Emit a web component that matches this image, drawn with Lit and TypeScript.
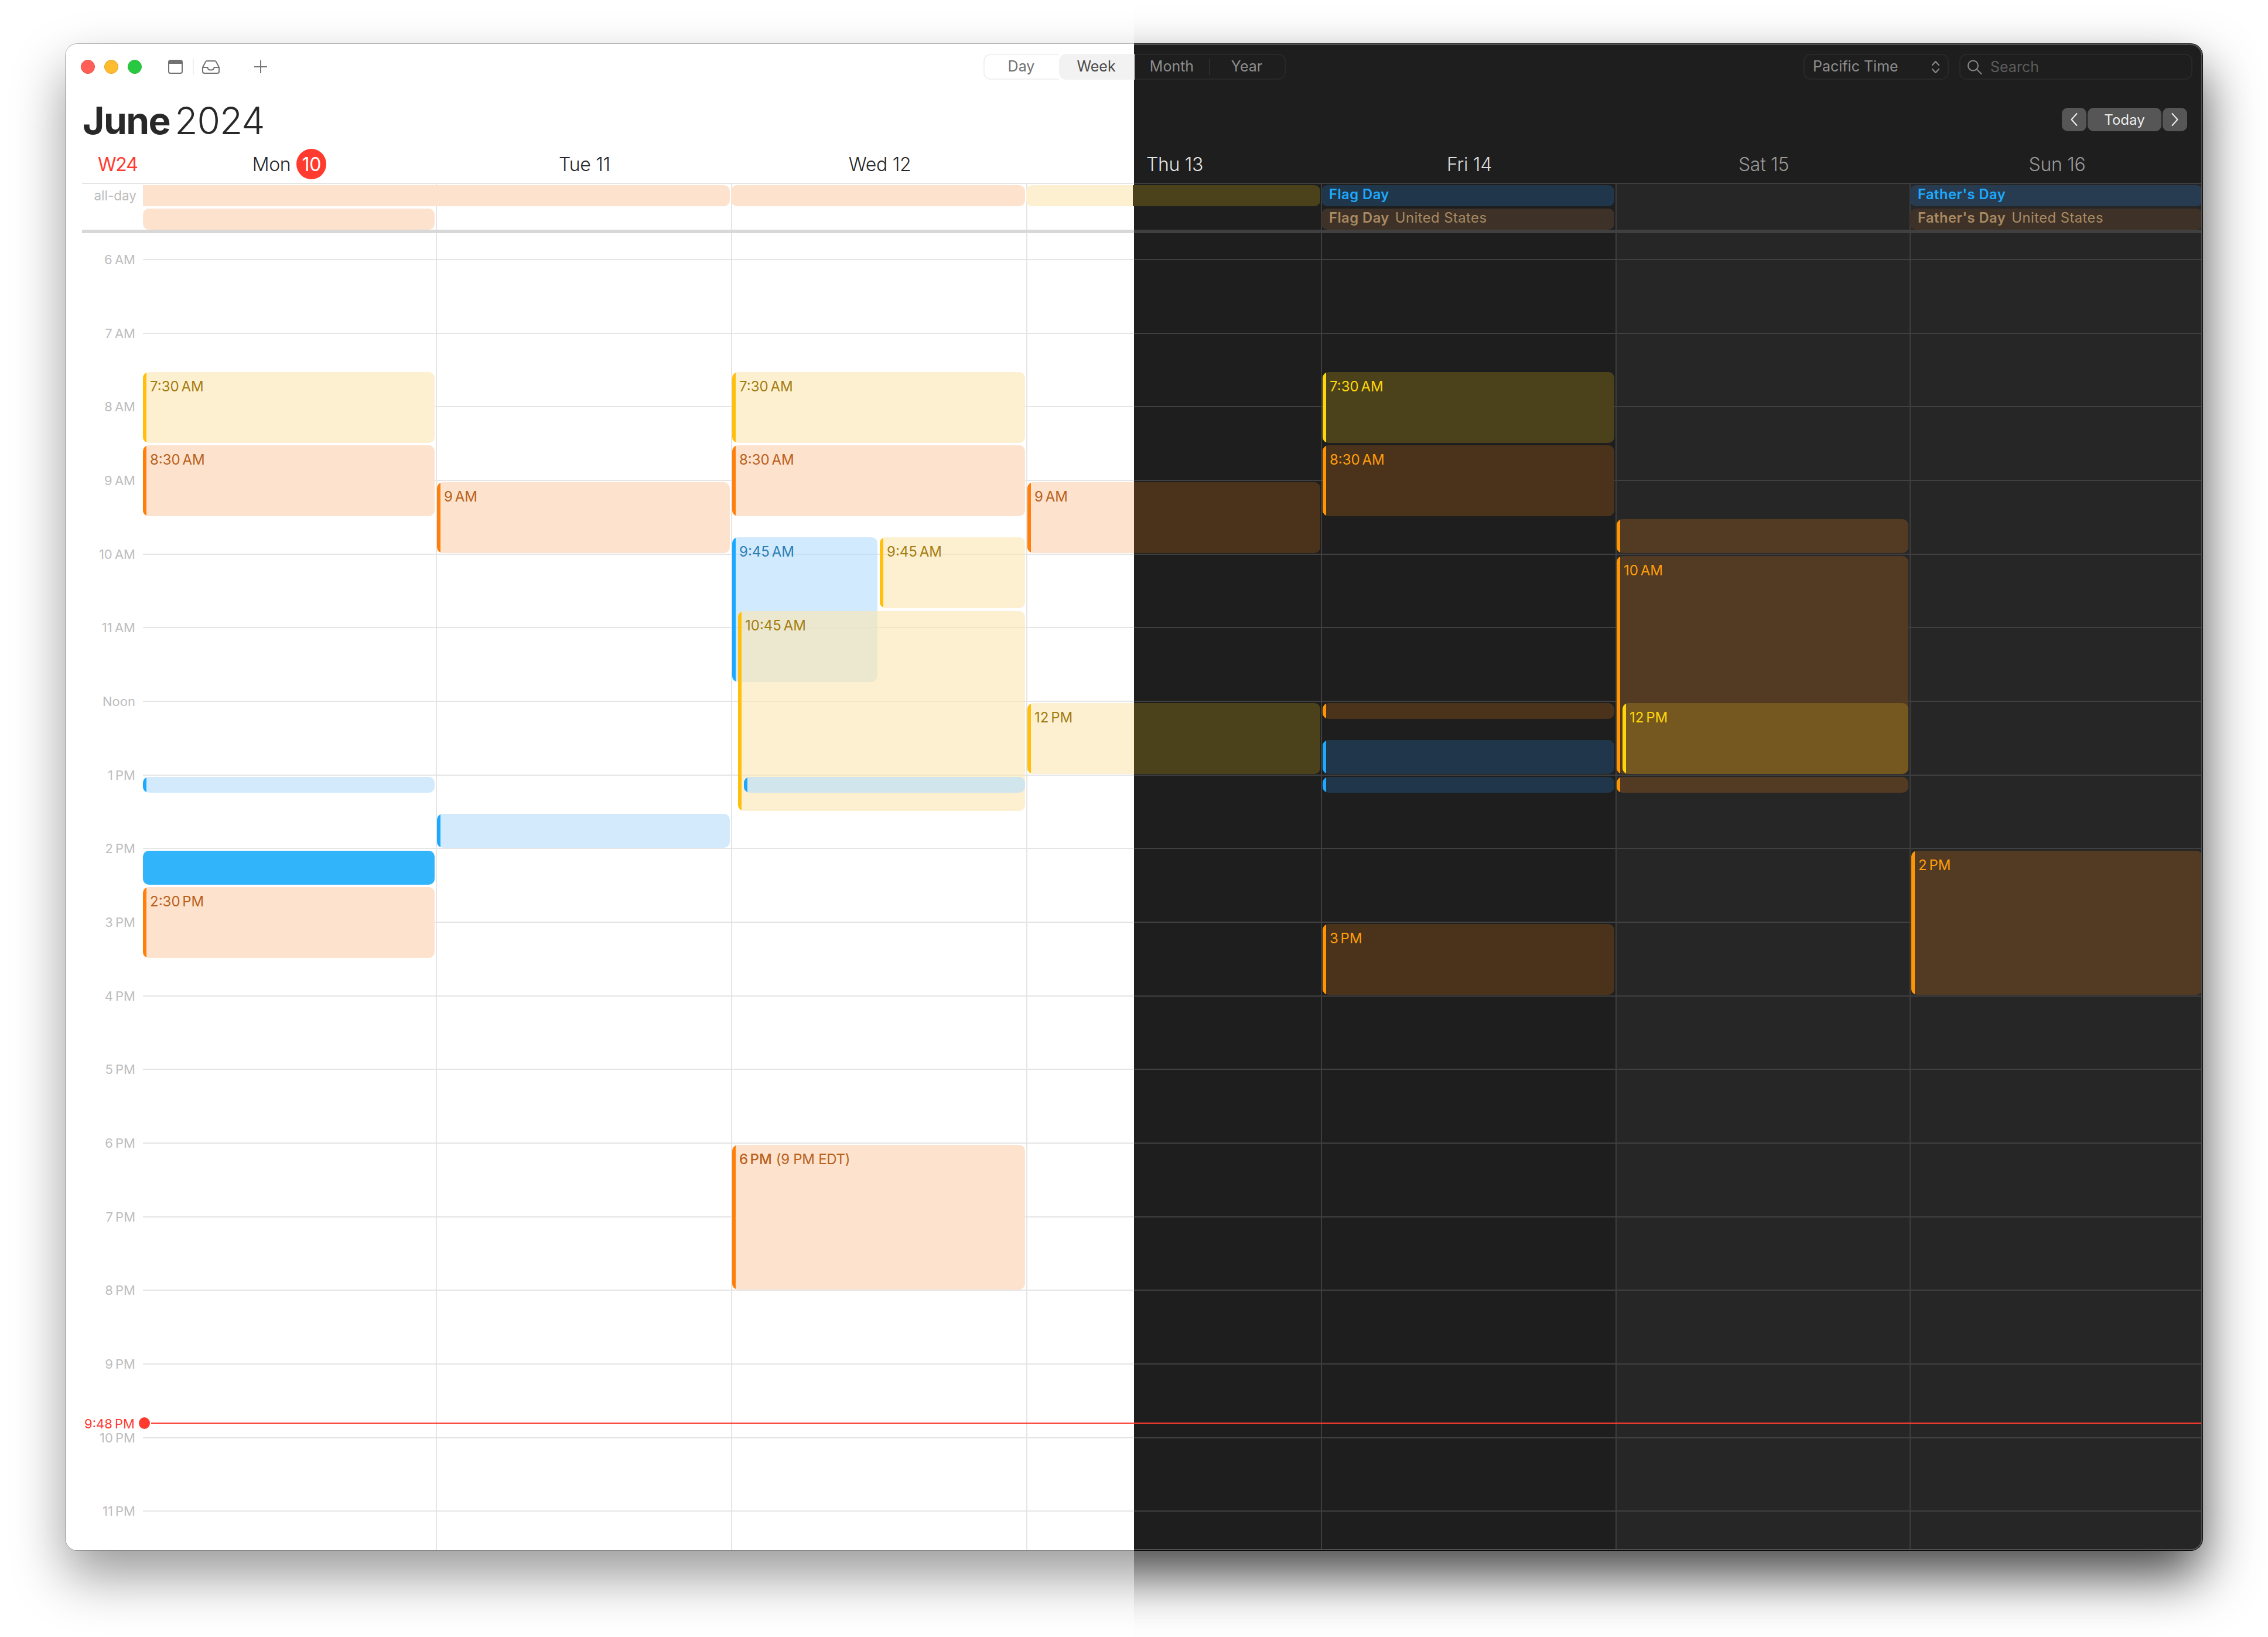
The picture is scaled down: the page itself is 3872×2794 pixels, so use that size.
import { LitElement, html, css, nothing } from "lit";
import { customElement } from "lit/decorators.js";

const H = 125.67;
const yOf = (t: number) => 45 + (t - 6) * H;
const LEFT = [0, 0, 0, 0, 1, 0, 1];
const RIGHT = [2, 2, 2, 1, 2, 2, 0];

type Ev = { s: number; e: number; c: string; label?: string; sub?: string; l?: number; r?: number; x?: string };

const DAYS: { name: string; cls: string; head: string; events: Ev[] }[] = [
  { name: "Mon", cls: "", head: "", events: [
    { s: 7.5, e: 8.5, c: "y", label: "7:30 AM" },
    { s: 8.5, e: 9.5, c: "o", label: "8:30 AM" },
    { s: 13, e: 13.25, c: "b" },
    { s: 14, e: 14.5, c: "s" },
    { s: 14.5, e: 15.5, c: "o", label: "2:30 PM" },
  ]},
  { name: "Tue 11", cls: "", head: "", events: [
    { s: 9, e: 10, c: "o", label: "9 AM" },
    { s: 13.5, e: 14, c: "b" },
  ]},
  { name: "Wed 12", cls: "", head: "", events: [
    { s: 7.5, e: 8.5, c: "y", label: "7:30 AM" },
    { s: 8.5, e: 9.5, c: "o", label: "8:30 AM" },
    { s: 9.75, e: 11.75, c: "b", label: "9:45 AM", r: 252, x: "t" },
    { s: 9.75, e: 10.75, c: "y", label: "9:45 AM", l: 252, x: "t" },
    { s: 10.75, e: 13.5, c: "y", label: "10:45 AM", l: 10, x: "t" },
    { s: 13, e: 13.25, c: "b", l: 20, x: "t" },
    { s: 18, e: 20, c: "o", label: "6 PM", sub: "(9 PM EDT)" },
  ]},
  { name: "Thu 13", cls: "thu", head: "hd-thu", events: [
    { s: 9, e: 10, c: "o", label: "9 AM" },
    { s: 12, e: 13, c: "y", label: "12 PM" },
  ]},
  { name: "Fri 14", cls: "dk", head: "hd-fri", events: [
    { s: 7.5, e: 8.5, c: "y", label: "7:30 AM" },
    { s: 8.5, e: 9.5, c: "o", label: "8:30 AM" },
    { s: 12, e: 12.25, c: "o" },
    { s: 12.5, e: 13, c: "b" },
    { s: 13, e: 13.25, c: "b" },
    { s: 15, e: 16, c: "o", label: "3 PM" },
  ]},
  { name: "Sat 15", cls: "dk wk", head: "hd-we", events: [
    { s: 9.5, e: 10, c: "o" },
    { s: 10, e: 13, c: "o", label: "10 AM" },
    { s: 12, e: 13, c: "y", label: "12 PM", l: 10 },
    { s: 13, e: 13.25, c: "o" },
  ]},
  { name: "Sun 16", cls: "dk wk", head: "hd-we", events: [
    { s: 14, e: 16, c: "o", label: "2 PM" },
  ]},
];

const HOURS = ["6 AM","7 AM","8 AM","9 AM","10 AM","11 AM","Noon","1 PM","2 PM","3 PM","4 PM","5 PM","6 PM","7 PM","8 PM","9 PM","10 PM","11 PM"];

type Ad = { col: number; span: number; row: number; c: string; label?: string; sub?: string };
const ALLDAY: Ad[] = [
  { col: 0, span: 2, row: 1, c: "ao flat" },
  { col: 2, span: 1, row: 1, c: "ao" },
  { col: 3, span: 1, row: 1, c: "ay" },
  { col: 4, span: 1, row: 1, c: "ab", label: "Flag Day" },
  { col: 6, span: 1, row: 1, c: "ab sun", label: "Father's Day" },
  { col: 0, span: 1, row: 2, c: "ao" },
  { col: 4, span: 1, row: 2, c: "an", label: "Flag Day", sub: "United States" },
  { col: 6, span: 1, row: 2, c: "an", label: "Father's Day", sub: "United States" },
];

@customElement("app-root")
export class AppRoot extends LitElement {
  static styles = css`
    :host { display: block; height: 2794px; background: #fff; overflow: hidden; font-family: Inter, "Liberation Sans", sans-serif; }
    .shell { position: relative; width: 3648px; height: 2571px; margin-left: 112px; top: 75px; }
    .shell::before, .shell::after { content: ""; position: absolute; inset: 0; border-radius: 20px; }
    .shell::before { box-shadow: 0 0 0 1px rgba(0,0,0,.3), 0 44px 90px rgba(0,0,0,.4); clip-path: inset(-300px 1824px -300px -300px); }
    .shell::after { box-shadow: 0 0 0 1px #000, 0 44px 90px rgba(0,0,0,.72); clip-path: inset(-300px -300px -300px 1824px); }
    .win { position: relative; z-index: 1; height: 100%; border-radius: 20px; overflow: hidden; display: flex; flex-direction: column;
      background: linear-gradient(90deg, #fff 1824px, #1e1e1e 1824px); }
    .win::after { content: ""; position: absolute; inset: 0; z-index: 50; border-radius: 20px; box-shadow: inset 0 0 0 2px #505050; clip-path: inset(0 0 0 1824px); pointer-events: none; }

    .bar { display: flex; align-items: center; height: 44px; margin-top: 17px; flex: none; }
    .dots { display: flex; gap: 16px; margin-left: 26px; }
    .dot { width: 24px; height: 24px; border-radius: 50%; box-sizing: border-box; border: 1px solid; }
    .red { background: #ff5f57; border-color: #e5504a; }
    .amber { background: #febc2e; border-color: #dea122; }
    .green { background: #28c840; border-color: #26b83b; }
    .ico-cal { margin-left: 45px; }
    .vsep { width: 2px; height: 28px; background: #efefef; margin-left: 17px; }
    .ico-inbox { margin-left: 14px; }
    .ico-plus { margin-left: 59px; }
    svg { display: block; flex: none; }

    .seg { display: flex; height: 44px; width: 516px; margin-left: 1223px; font-size: 25px; box-sizing: border-box; }
    .seg > div { width: 129px; box-sizing: border-box; display: flex; align-items: center; justify-content: center; border: 2px solid; padding: 0 2px 2px 0; }
    .seg-day { border-color: #f1f1f1 !important; border-right: 0 !important; border-radius: 12px 0 0 12px; color: #6f6f6f; }
    .seg-week { background: #f2f2f2; border-color: #f2f2f2 !important; border-radius: 12px 0 0 12px; color: #4a4a4a; }
    .seg-month { border-color: #282828 !important; border-left: 0 !important; border-right: 0 !important; color: #8e8e8e; position: relative; }
    .seg-month::after { content: ""; position: absolute; right: 0; top: 6px; bottom: 6px; width: 2px; background: #2c2c2c; }
    .seg-year { border-color: #282828 !important; border-left: 0 !important; border-radius: 0 12px 12px 0; color: #8e8e8e; }

    .select { width: 248px; height: 44px; margin-left: 884px; box-sizing: border-box; border: 2px solid #282828; border-radius: 12px; display: flex; align-items: center; justify-content: space-between; padding: 0 13px 0 14px; font-size: 25px; color: #8e8e8e; }
    .select span { padding-bottom: 3px; }
    .search { width: 398px; height: 44px; margin-left: 18px; box-sizing: border-box; border: 2px solid #282828; border-radius: 12px; display: flex; align-items: center; gap: 14px; padding-left: 11px; font-size: 25px; color: #5c5c5c; }

    .titlerow { display: flex; justify-content: space-between; height: 112px; flex: none; }
    .title { font-size: 64px; line-height: 64px; margin: 38px 0 0 29px; color: #282828; font-weight: 300; letter-spacing: -1px; word-spacing: -9px; }
    .title b { font-weight: 700; letter-spacing: -1.5px; }
    .nav { display: flex; gap: 2px; margin: 48px 26px 0 0; height: 40px; font-size: 24px; color: #ececec; }
    .nav > div { background: #565656; border-radius: 10px; display: flex; align-items: center; justify-content: center; height: 40px; }
    .nav .arrow { width: 42px; }
    .nav .today { width: 126px; }

    .dayhead { display: grid; grid-template-columns: 132px 500px 504px 504px 503px 503px 502px 500px; height: 64px; flex: none; align-items: center; font-size: 32px; font-weight: 300; color: #262626; letter-spacing: -.3px; }
    .week { color: #ff3b30; font-weight: 400; padding-left: 55px; letter-spacing: -1.2px; }
    .hd { text-align: center; display: flex; justify-content: center; align-items: center; gap: 9px; padding-left: 4px; }
    .hd.mon { padding-left: 0; padding-right: 0; gap: 10px; }
    .hd-thu { color: #e4e4e4; }
    .hd-fri { color: #dcdcdc; }
    .hd-we { color: #9a9a9a; }
    .badge { width: 51px; height: 52px; border-radius: 50%; background: #ff3b30; color: #fff; display: flex; align-items: center; justify-content: center; font-weight: 400; }

    .hline { height: 2px; margin-left: 28px; flex: none; background: linear-gradient(90deg, #e5e5e5 1796px, #3e3e3e 1796px); }
    .allday { display: grid; grid-template-columns: 104px 500px 504px 504px 503px 503px 502px 500px; grid-template-rows: 36px 36px; row-gap: 4px; height: 78px; box-sizing: border-box; padding-top: 2px; margin-left: 28px; flex: none;
      background: linear-gradient(90deg, transparent 2618px, #262626 2618px); }
    .adlabel { grid-column: 1; grid-row: 1; font-size: 22.5px; color: #bcbcbc; text-align: right; padding-right: 11px; line-height: 36px; }
    .adcell { grid-row: 1 / 3; margin: -2px 0; border-left: 2px solid #e5e5e5; }
    .adcell.dark { border-left-color: #3e3e3e; }
    .a { border-radius: 10px; font-size: 23.8px; line-height: 32px; padding-left: 13px; letter-spacing: .45px; white-space: nowrap; overflow: hidden; position: relative; }
    .ao { background: #fde2cd; }
    .ay { background: linear-gradient(90deg, #fdf0d0 182px, #4b421b 182px); }
    .ab { background: #20364a; color: #1ea9ff; font-weight: 600; }
    .ab.sun { background: #273c50; }
    .an { background: #3e3228; color: #a98a62; }
    .an b { font-weight: 600; }
    .flat { border-radius: 0 10px 10px 0; }
    .a .gap { margin-left: 10px; }

    .thick { height: 6px; margin-left: 28px; flex: none; background: linear-gradient(90deg, #d8d8d8 1796px, #404040 1796px); }

    .hours { position: relative; flex: 1; overflow: hidden; padding-top: 44px; min-height: 0;
      background: linear-gradient(90deg, transparent 2646px, #262626 2646px); }
    .row { display: flex; height: ${H}px; }
    .hlabel { width: 132px; height: 28px; margin-top: -13px; flex: none; box-sizing: border-box; padding-right: 13px; text-align: right; font-size: 22px; line-height: 28px; color: #bdbdbd; word-spacing: -2px; }
    .rule { flex: 1; background: linear-gradient(90deg, #e5e5e5 1692px, #404040 1692px) top / 100% 2px no-repeat; }

    .days { position: absolute; top: 0; bottom: 0; left: 132px; right: 0; display: grid; grid-template-columns: 500px 504px 504px 503px 503px 502px 500px; }
    .day { position: relative; border-left: 2px solid #e5e5e5; box-sizing: border-box;
      --oBg: #fde2cd; --oBar: #ff7f0a; --oTx: #b9601b;
      --yBg: #fdf0d0; --yBar: #ffbf0a; --yTx: #a37c10;
      --bBg: #d3eafd; --bBar: #1aa9ff; --bTx: #2a7fb3; }
    .day.first { border-left: 0; }
    .day.thu { border-left-color: #e5e5e5;
      --oBg: linear-gradient(90deg, #fde2cd 182px, #4b321b 182px);
      --yBg: linear-gradient(90deg, #fdf0d0 182px, #4b421b 182px); }
    .day.dk { border-left-color: #3e3e3e;
      --oBg: #4b321b; --oBar: #ff9500; --oTx: #ff9f0a;
      --yBg: #4b421b; --yBar: #ffd60a; --yTx: #ffd60a;
      --bBg: #20364a; --bBar: #1ea9ff; --bTx: #1ea9ff; }
    .day.wk { --oBg: #533a22; --yBg: #75581f; }

    .ev { position: absolute; border-radius: 10px; overflow: hidden; box-sizing: border-box; padding: 11px 0 0 12px; font-size: 24px; line-height: 28px; word-spacing: -3px; white-space: nowrap; }
    .ev::before { content: ""; position: absolute; left: 0; top: 0; bottom: 0; width: 6px; }
    .ev.o { background: var(--oBg); color: var(--oTx); }
    .ev.o::before { background: var(--oBar); }
    .ev.y { background: var(--yBg); color: var(--yTx); }
    .ev.y::before { background: var(--yBar); }
    .ev.b { background: var(--bBg); color: var(--bTx); }
    .ev.b::before { background: var(--bBar); }
    .ev.s { background: #32b4fb; }
    .ev.y.t { background: rgba(252, 232, 181, .63); }
    .ev.b.t { background: rgba(184, 221, 252, .63); }
    .ev .sub { margin-left: 7px; font-weight: 400; word-spacing: 0; letter-spacing: -.3px; }
    .ev b { font-weight: 500; }

    .now { position: absolute; top: 2030px; left: 28px; right: 0; height: 2px; display: flex; align-items: center; color: #ff3b30; z-index: 20; }
    .now-label { width: 90px; flex: none; text-align: right; font-size: 22px; line-height: 28px; word-spacing: -2px; white-space: nowrap; padding-top: 2px; }
    .now-dot { width: 19px; height: 20px; border-radius: 50%; background: #ff3b30; margin: 0 2px 0 7px; flex: none; }
    .now-line { flex: 1; height: 2px; background: #ff3b30; }
  `;

  private ev(e: Ev, i: number) {
    const top = yOf(e.s) + 3.2;
    const bottom = yOf(e.e) - 1.5;
    const left = LEFT[i] + (e.l ?? 0);
    const right = RIGHT[i] + (e.r ?? 0);
    const cls = `ev ${e.c} ${e.x ?? ""}`;
    return html`<div class=${cls} style="top:${top}px;height:${bottom - top}px;left:${left}px;right:${right}px">${e.label
      ? html`${e.sub ? html`<b>${e.label}</b><span class="sub">${e.sub}</span>` : e.label}`
      : nothing}</div>`;
  }

  private ad(a: Ad) {
    const last = a.col + a.span - 1;
    const style = `grid-column:${a.col + 2} / span ${a.span};grid-row:${a.row};margin-left:${LEFT[a.col]}px;margin-right:${RIGHT[last]}px`;
    return html`<div class="a ${a.c}" style=${style}>${a.sub
      ? html`<b>${a.label}</b><span class="gap">${a.sub}</span>`
      : a.label ?? nothing}</div>`;
  }

  render() {
    return html`
      <div class="shell"><div class="win">
        <div class="bar">
          <div class="dots"><div class="dot red"></div><div class="dot amber"></div><div class="dot green"></div></div>
          <svg class="ico-cal" width="25" height="24" viewBox="0 0 25 24" fill="none">
            <rect x="1" y="1" width="23" height="22" rx="3" stroke="#727272" stroke-width="2"/>
            <path d="M1 7V4a3 3 0 0 1 3-3h17a3 3 0 0 1 3 3v3z" fill="#727272"/>
            <g fill="#727272">
              ${[11, 15, 19].map((y) => [6, 10, 14, 18].map((x) => html`<circle cx=${x + 0.5} cy=${y} r="1"></circle>`))}
            </g>
          </svg>
          <div class="vsep"></div>
          <svg class="ico-inbox" width="30" height="23" viewBox="0 0 30 23" fill="none" stroke="#727272" stroke-width="2" stroke-linejoin="round">
            <path d="M1 12 6 2.5A2.5 2.5 0 0 1 8 1h14a2.5 2.5 0 0 1 2 1.5L29 12v7a3 3 0 0 1-3 3H4a3 3 0 0 1-3-3z"/>
            <path d="M1 12h8.5c0 3 2.5 4.5 5.5 4.500s5.500-1.500 5.500-4.500H29"/>
          </svg>
          <svg class="ico-plus" width="22" height="22" viewBox="0 0 22 22" stroke="#777" stroke-width="2"><path d="M11 0v22M0 11h22"/></svg>
          <div class="seg">
            <div class="seg-day">Day</div><div class="seg-week">Week</div><div class="seg-month">Month</div><div class="seg-year">Year</div>
          </div>
          <div class="select"><span>Pacific Time</span>
            <svg width="15" height="23" viewBox="0 0 15 23" fill="none" stroke="#8e8e8e" stroke-width="2" stroke-linecap="round" stroke-linejoin="round"><path d="M2 8 7.500 2 13 8M2 15l5.500 6 5.500-6"/></svg>
          </div>
          <div class="search">
            <svg width="26" height="25" viewBox="0 0 26 25" fill="none" stroke="#8a8a8a" stroke-width="2" stroke-linecap="round"><circle cx="10.500" cy="10" r="8.500"/><path d="M17 16.500 24.500 24"/></svg>
            Search
          </div>
        </div>
        <div class="titlerow">
          <div class="title"><b>June</b> 2024</div>
          <div class="nav">
            <div class="arrow"><svg width="12" height="22" viewBox="0 0 12 22" fill="none" stroke="#ececec" stroke-width="2" stroke-linecap="round" stroke-linejoin="round"><path d="M10.500 1 1.500 11l9 10"/></svg></div>
            <div class="today">Today</div>
            <div class="arrow"><svg width="12" height="22" viewBox="0 0 12 22" fill="none" stroke="#ececec" stroke-width="2" stroke-linecap="round" stroke-linejoin="round"><path d="M1.500 1l9 10-9 10"/></svg></div>
          </div>
        </div>
        <div class="dayhead">
          <div class="week">W24</div>
          ${DAYS.map((d, i) => html`<div class="hd ${d.head} ${i === 0 ? "mon" : ""}">${i === 0 ? html`Mon <span class="badge">10</span>` : d.name}</div>`)}
        </div>
        <div class="hline"></div>
        <div class="allday">
          <div class="adlabel">all-day</div>
          ${DAYS.map((_, i) => i === 0 ? nothing : html`<div class="adcell ${i > 3 ? "dark" : ""}" style="grid-column:${i + 2}"></div>`)}
          ${ALLDAY.map((a) => this.ad(a))}
        </div>
        <div class="thick"></div>
        <div class="hours">
          ${HOURS.map((h) => html`<div class="row"><div class="hlabel">${h}</div><div class="rule"></div></div>`)}
          <div class="days">
            ${DAYS.map((d, i) => html`<div class="day ${d.cls} ${i === 0 ? "first" : ""}">${d.events.map((e) => this.ev(e, i))}</div>`)}
          </div>
          <div class="now"><div class="now-label">9:48 PM</div><div class="now-dot"></div><div class="now-line"></div></div>
        </div>
      </div></div>
    `;
  }
}
